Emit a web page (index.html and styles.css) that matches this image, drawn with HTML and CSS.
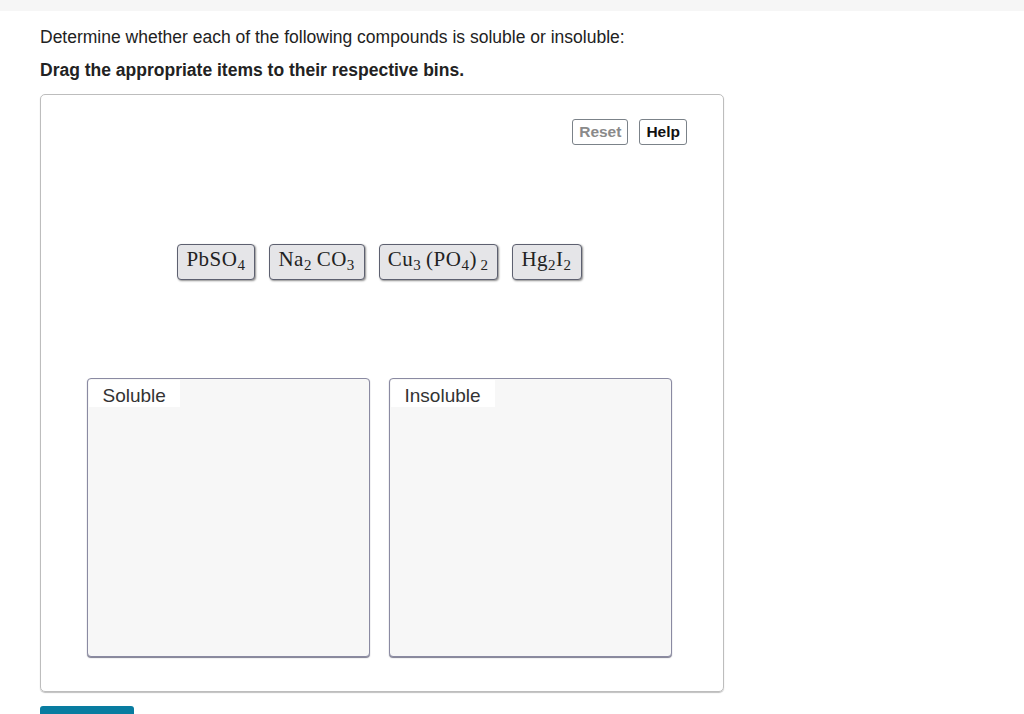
FILE: index.html
```html
<!DOCTYPE html>
<html lang="en">
<head>
    <meta charset="UTF-8">
    <title>Soluble or Insoluble</title>
    <link rel="stylesheet" href="styles.css">
</head>
<body>
    <div class="top-bar"></div>

    <div class="page">
        <p class="prompt">Determine whether each of the following compounds is soluble or insoluble:</p>
        <p class="instruction">Drag the appropriate items to their respective bins.</p>

        <div class="task-box">
            <div class="toolbar">
                <button class="tool-btn disabled" type="button">Reset</button>
                <button class="tool-btn" type="button">Help</button>
            </div>

            <div class="items">
                <div class="item"><span>PbSO<sub>4</sub></span></div>
                <div class="item"><span>Na<sub>2</sub>&#8201;CO<sub>3</sub></span></div>
                <div class="item"><span>Cu<sub>3</sub>&#8201;(PO<sub>4</sub>)<sub>&#8201;2</sub></span></div>
                <div class="item"><span>Hg<sub>2</sub>I<sub>2</sub></span></div>
            </div>

            <div class="bins">
                <div class="bin">
                    <span class="bin-label">Soluble</span>
                </div>
                <div class="bin">
                    <span class="bin-label">Insoluble</span>
                </div>
            </div>
        </div>

        <div class="submit-btn"></div>
    </div>
</body>
</html>
```

FILE: styles.css
```css
* {
    box-sizing: border-box;
    margin: 0;
    padding: 0;
}

body {
    background-color: #fff;
    color: #222;
    font-family: 'Liberation Sans', Arial, sans-serif;
    height: 714px;
    overflow: hidden;
}

.top-bar {
    height: 11px;
    background-color: #f6f6f6;
}

.page {
    padding-left: 40px;
}

.prompt {
    font-size: 17.5px;
    line-height: 20px;
    margin-top: 16px;
    color: #222;
}

.instruction {
    font-size: 17.5px;
    line-height: 20px;
    font-weight: bold;
    margin-top: 13px;
    color: #222;
}

/* Drag and drop box */
.task-box {
    width: 684px;
    margin-top: 14px;
    border: 1px solid #bdbdbd;
    border-radius: 5px;
    box-shadow: 0 1px 1px rgba(0, 0, 0, 0.25);
    padding-bottom: 34px;
}

.toolbar {
    display: flex;
    justify-content: flex-end;
    gap: 11px;
    padding: 24px 36px 0 0;
}

.tool-btn {
    height: 26px;
    padding: 0 6px;
    font-family: 'Liberation Sans', Arial, sans-serif;
    font-size: 15.5px;
    font-weight: bold;
    color: #111;
    background-color: #fff;
    border: 1px solid #7b8289;
    border-radius: 3px;
}

.tool-btn.disabled {
    color: #8a8a8a;
}

.items {
    display: flex;
    justify-content: center;
    gap: 14px;
    margin-top: 99px;
    padding-right: 5px;
}

.item {
    height: 36px;
    padding: 0 9px 0 8px;
    display: flex;
    align-items: center;
    font-family: 'Liberation Serif', 'Times New Roman', serif;
    font-size: 21px;
    letter-spacing: 0.5px;
    color: #222;
    background-color: #e5e5e8;
    border: 1px solid #5d6070;
    border-radius: 4px;
    box-shadow: 1px 1px 2px rgba(0, 0, 0, 0.45);
}

.item span {
    position: relative;
    top: -2px;
}

.item sub {
    font-size: 15px;
    vertical-align: -4px;
    line-height: 1;
}

.bins {
    display: flex;
    justify-content: center;
    gap: 19px;
    margin-top: 98px;
    padding-right: 6px;
}

.bin {
    width: 283px;
    height: 279px;
    padding: 1px;
    background-color: #f7f7f7;
    border: 1px solid #8a8aa2;
    border-radius: 4px;
    box-shadow: 0 1px 1px rgba(40, 40, 70, 0.6);
}

.bin-label {
    display: inline-block;
    height: 27px;
    line-height: 27px;
    padding: 2px 14px 0 14px;
    font-size: 19px;
    color: #333;
    background-color: #fff;
}

.submit-btn {
    width: 94px;
    height: 20px;
    margin-top: 14px;
    background-color: #087ca0;
    border-radius: 3px 3px 0 0;
}
```
